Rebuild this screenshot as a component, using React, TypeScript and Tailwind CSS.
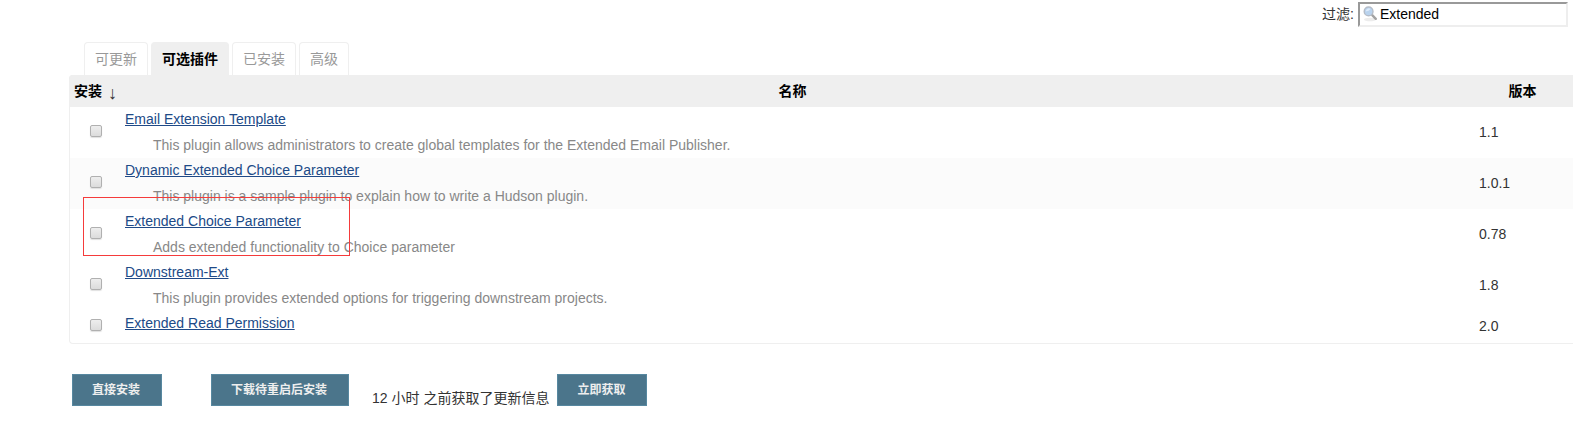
import { useState } from "react"

interface Plugin {
  name: string
  description?: string
  version: string
}

const tabs = ["可更新", "可选插件", "已安装", "高级"]

const plugins: Plugin[] = [
  {
    name: "Email Extension Template",
    description: "This plugin allows administrators to create global templates for the Extended Email Publisher.",
    version: "1.1",
  },
  {
    name: "Dynamic Extended Choice Parameter",
    description: "This plugin is a sample plugin to explain how to write a Hudson plugin.",
    version: "1.0.1",
  },
  {
    name: "Extended Choice Parameter",
    description: "Adds extended functionality to Choice parameter",
    version: "0.78",
  },
  {
    name: "Downstream-Ext",
    description: "This plugin provides extended options for triggering downstream projects.",
    version: "1.8",
  },
  { name: "Extended Read Permission", version: "2.0" },
]

function SearchIcon() {
  return (
    <svg width="16" height="16" viewBox="0 0 16 16" className="shrink-0">
      <ellipse cx="7" cy="13.5" rx="6" ry="1.8" fill="#ececec" />
      <path d="M9.2 9.2 L12.8 12.8" stroke="#a3a3a3" strokeWidth="2.4" strokeLinecap="round" />
      <circle cx="5.6" cy="5.4" r="4.4" fill="#b9d3ee" stroke="#b4bcc8" strokeWidth="1.4" />
      <path d="M2.8 5.2 A3 3 0 0 1 7.6 3 Q5.1 6 2.8 5.2Z" fill="#dceafa" />
    </svg>
  )
}

function ActionButton({ label }: { label: string }) {
  return (
    <button className="h-8 border border-[#5788a0] bg-[#4b758b] pr-[21px] pl-[19px] text-xs leading-[30px] font-bold text-[#eeeeee]">
      {label}
    </button>
  )
}

export default function App() {
  const [activeTab, setActiveTab] = useState("可选插件")
  const [filter, setFilter] = useState("Extended")

  return (
    <div className="h-[433px] overflow-hidden bg-white font-['Liberation_Sans','Noto_Sans_CJK_SC',sans-serif] text-sm leading-5 text-[#333333]">
      {/* Filter */}
      <div className="flex h-[42px] items-start justify-end pt-0.5 pr-[5px]">
        <label className="mr-1 pt-0.5">过滤:</label>
        <div className="flex h-[25px] w-[210px] items-start border-2 border-t-[#999999] border-r-[#eeeeee] border-b-[#eeeeee] border-l-[#999999] pl-[3px]">
          <div className="pt-0.5">
            <SearchIcon />
          </div>
          <input
            value={filter}
            onChange={(e) => setFilter(e.target.value)}
            className="ml-px h-5 w-[180px] text-black outline-none"
          />
        </div>
      </div>

      {/* Tabs */}
      <div className="flex h-[33px] gap-[3px] pl-[84px]">
        {tabs.map((tab) => (
          <button
            key={tab}
            onClick={() => setActiveTab(tab)}
            className={
              tab === activeTab
                ? "rounded-t border border-b-0 border-[#efefef] bg-[#efefef] px-2.5 font-bold text-black"
                : "rounded-t border border-b-0 border-[#efefef] bg-white px-2.5 text-[#999999]"
            }
          >
            {tab}
          </button>
        ))}
      </div>

      {/* Plugin list */}
      <div className="relative ml-[69px] h-[269px] rounded-l border border-r-0 border-[#efefef]">
        <div className="-mt-px -ml-px flex h-8 items-center rounded-tl bg-[#efefef] font-bold text-black">
          <div className="flex w-[52px] shrink-0 items-center pl-[5px]">
            <span>安装</span>
            <span className="mt-[3px] ml-1.5 font-['Liberation_Serif'] text-lg leading-5 font-normal text-[#333333]">↓</span>
          </div>
          <div className="flex-1 pr-2 text-center">名称</div>
          <div className="w-[101px] text-center">版本</div>
        </div>
        {plugins.map((plugin, index) => (
          <div
            key={plugin.name}
            className={index === 1 ? "flex h-[51px] bg-[#fbfbfb]" : plugin.description ? "flex h-[51px]" : "flex h-8"}
          >
            <div className={plugin.description ? "w-[55px] pt-[18px] pl-5" : "w-[55px] pt-2 pl-5"}>
              <input
                type="checkbox"
                className="block size-3 appearance-none rounded-[2px] border border-[#b0b0b0] bg-linear-to-b from-[#eeeeee] to-[#dcdcdc] shadow-[0_1px_1px_#e0e0e0]"
              />
            </div>
            <div className="flex-1 pt-0.5">
              <a href="#" className="block w-fit text-[#204a87] underline">
                {plugin.name}
              </a>
              {plugin.description && <div className="mt-1.5 pl-7 text-[#888888]">{plugin.description}</div>}
            </div>
            <div className={plugin.description ? "w-[94px] pt-[15px]" : "w-[94px] pt-[5px]"}>{plugin.version}</div>
          </div>
        ))}
        {/* Highlighted plugin */}
        <div className="pointer-events-none absolute top-[121px] left-[13px] h-[59px] w-[267px] border border-[#f53b3b]" />
      </div>

      {/* Actions */}
      <div className="flex pt-[30px] pl-[72px]">
        <ActionButton label="直接安装" />
        <div className="ml-[49px]">
          <ActionButton label="下载待重启后安装" />
        </div>
        <span className="mr-2 ml-[23px] pt-3.5">12 小时 之前获取了更新信息</span>
        <ActionButton label="立即获取" />
      </div>
    </div>
  )
}
